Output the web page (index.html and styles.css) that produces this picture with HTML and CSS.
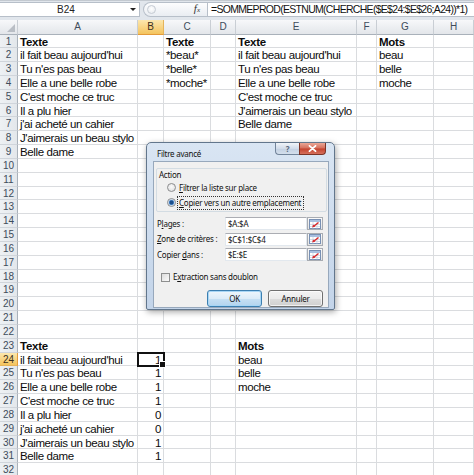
FILE: index.html
```html
<!DOCTYPE html>
<html lang="fr">
<head>
<meta charset="utf-8">
<title>Filtre avancé</title>
<link rel="stylesheet" href="styles.css">
</head>
<body>
<div class="fbar">
  <div class="namebox"><span class="nb-text">B24</span><span class="nb-arrow"></span></div>
  <div class="fctl">
    <div class="pill"><span class="grip"></span><span class="fx">f<span class="fxs">x</span></span></div>
  </div>
  <div class="formula">=SOMMEPROD(ESTNUM(CHERCHE($E$24:$E$26;A24))*1)</div>
</div>

<div class="sheet">
  <div class="ch corner"><svg width="8" height="8" viewBox="0 0 8 8"><polygon points="8,0 8,8 0,8" fill="#b9bec5"/></svg></div><div class="ch">A</div><div class="ch sel">B</div><div class="ch">C</div><div class="ch">D</div><div class="ch">E</div><div class="ch">F</div><div class="ch">G</div><div class="ch">H</div>

  <div class="rh">1</div><div class="b">Texte</div><div></div><div class="b">Texte</div><div></div><div class="b">Texte</div><div></div><div class="b">Mots</div><div></div>
  <div class="rh">2</div><div>il fait beau aujourd'hui</div><div></div><div>*beau*</div><div></div><div>il fait beau aujourd'hui</div><div></div><div>beau</div><div></div>
  <div class="rh">3</div><div>Tu n'es pas beau</div><div></div><div>*belle*</div><div></div><div>Tu n'es pas beau</div><div></div><div>belle</div><div></div>
  <div class="rh">4</div><div>Elle a une belle robe</div><div></div><div>*moche*</div><div></div><div>Elle a une belle robe</div><div></div><div>moche</div><div></div>
  <div class="rh">5</div><div>C'est moche ce truc</div><div></div><div></div><div></div><div>C'est moche ce truc</div><div></div><div></div><div></div>
  <div class="rh">6</div><div>Il a plu hier</div><div></div><div></div><div></div><div>J'aimerais un beau stylo</div><div></div><div></div><div></div>
  <div class="rh">7</div><div>j'ai acheté un cahier</div><div></div><div></div><div></div><div>Belle dame</div><div></div><div></div><div></div>
  <div class="rh">8</div><div>J'aimerais un beau stylo</div><div></div><div></div><div></div><div></div><div></div><div></div><div></div>
  <div class="rh">9</div><div>Belle dame</div><div></div><div></div><div></div><div></div><div></div><div></div><div></div>
  <div class="rh">10</div><div></div><div></div><div></div><div></div><div></div><div></div><div></div><div></div>
  <div class="rh">11</div><div></div><div></div><div></div><div></div><div></div><div></div><div></div><div></div>
  <div class="rh">12</div><div></div><div></div><div></div><div></div><div></div><div></div><div></div><div></div>
  <div class="rh">13</div><div></div><div></div><div></div><div></div><div></div><div></div><div></div><div></div>
  <div class="rh">14</div><div></div><div></div><div></div><div></div><div></div><div></div><div></div><div></div>
  <div class="rh">15</div><div></div><div></div><div></div><div></div><div></div><div></div><div></div><div></div>
  <div class="rh">16</div><div></div><div></div><div></div><div></div><div></div><div></div><div></div><div></div>
  <div class="rh">17</div><div></div><div></div><div></div><div></div><div></div><div></div><div></div><div></div>
  <div class="rh">18</div><div></div><div></div><div></div><div></div><div></div><div></div><div></div><div></div>
  <div class="rh">19</div><div></div><div></div><div></div><div></div><div></div><div></div><div></div><div></div>
  <div class="rh">20</div><div></div><div></div><div></div><div></div><div></div><div></div><div></div><div></div>
  <div class="rh">21</div><div></div><div></div><div></div><div></div><div></div><div></div><div></div><div></div>
  <div class="rh">22</div><div></div><div></div><div></div><div></div><div></div><div></div><div></div><div></div>
  <div class="rh">23</div><div class="b">Texte</div><div></div><div></div><div></div><div class="b">Mots</div><div></div><div></div><div></div>
  <div class="rh sel">24</div><div>il fait beau aujourd'hui</div><div class="n active">1</div><div></div><div></div><div>beau</div><div></div><div></div><div></div>
  <div class="rh">25</div><div>Tu n'es pas beau</div><div class="n">1</div><div></div><div></div><div>belle</div><div></div><div></div><div></div>
  <div class="rh">26</div><div>Elle a une belle robe</div><div class="n">1</div><div></div><div></div><div>moche</div><div></div><div></div><div></div>
  <div class="rh">27</div><div>C'est moche ce truc</div><div class="n">1</div><div></div><div></div><div></div><div></div><div></div><div></div>
  <div class="rh">28</div><div>Il a plu hier</div><div class="n">0</div><div></div><div></div><div></div><div></div><div></div><div></div>
  <div class="rh">29</div><div>j'ai acheté un cahier</div><div class="n">0</div><div></div><div></div><div></div><div></div><div></div><div></div>
  <div class="rh">30</div><div>J'aimerais un beau stylo</div><div class="n">1</div><div></div><div></div><div></div><div></div><div></div><div></div>
  <div class="rh">31</div><div>Belle dame</div><div class="n">1</div><div></div><div></div><div></div><div></div><div></div><div></div>
  <div class="rh">32</div><div></div><div></div><div></div><div></div><div></div><div></div><div></div><div></div>
</div>

<div class="dialog">
  <div class="titlebar">
    <span class="title">Filtre avancé</span>
    <span class="tb-help">?</span>
    <span class="tb-close"><svg width="9" height="7" viewBox="0 0 9 7"><path d="M1.5 0.8 L7.5 6.2 M7.5 0.8 L1.5 6.2" stroke="#fff" stroke-width="1.8" stroke-linecap="round"/></svg></span>
  </div>
  <div class="client">
    <div class="group">
      <div class="glabel">Action</div>
      <div class="opt"><span class="radio"></span><span class="otext"><u>F</u>iltrer la liste sur place</span></div>
      <div class="opt"><span class="radio on"></span><span class="otext focus"><u>C</u>opier vers un autre emplacement</span></div>
    </div>
    <div class="field"><span class="flabel">P<u>l</u>ages :</span><span class="input">$A:$A</span><span class="refbtn"><svg width="12" height="10" viewBox="0 0 12 10"><rect x="0.5" y="0.5" width="11" height="9" fill="#fff" stroke="#7890b4"/><rect x="1" y="1" width="10" height="2" fill="#a8c0e0"/><path d="M1 5.5H11M1 7.5H11M4 3V9.5M8 3V9.5" stroke="#c5d0de" stroke-width="0.7"/><path d="M9.5 3.5 L4.5 7.5" stroke="#d8262a" stroke-width="1.4"/><path d="M3.2 8.6 L4 5.6 L6.2 7.6 Z" fill="#d8262a"/></svg></span></div>
    <div class="field"><span class="flabel"><u>Z</u>one de critères :</span><span class="input">$C$1:$C$4</span><span class="refbtn"><svg width="12" height="10" viewBox="0 0 12 10"><rect x="0.5" y="0.5" width="11" height="9" fill="#fff" stroke="#7890b4"/><rect x="1" y="1" width="10" height="2" fill="#a8c0e0"/><path d="M1 5.5H11M1 7.5H11M4 3V9.5M8 3V9.5" stroke="#c5d0de" stroke-width="0.7"/><path d="M9.5 3.5 L4.5 7.5" stroke="#d8262a" stroke-width="1.4"/><path d="M3.2 8.6 L4 5.6 L6.2 7.6 Z" fill="#d8262a"/></svg></span></div>
    <div class="field"><span class="flabel">Copier <u>d</u>ans :</span><span class="input">$E:$E</span><span class="refbtn"><svg width="12" height="10" viewBox="0 0 12 10"><rect x="0.5" y="0.5" width="11" height="9" fill="#fff" stroke="#7890b4"/><rect x="1" y="1" width="10" height="2" fill="#a8c0e0"/><path d="M1 5.5H11M1 7.5H11M4 3V9.5M8 3V9.5" stroke="#c5d0de" stroke-width="0.7"/><path d="M9.5 3.5 L4.5 7.5" stroke="#d8262a" stroke-width="1.4"/><path d="M3.2 8.6 L4 5.6 L6.2 7.6 Z" fill="#d8262a"/></svg></span></div>
    <div class="checkrow"><span class="check"></span><span class="otext">E<u>x</u>traction sans doublon</span></div>
    <div class="buttons"><span class="btn default">OK</span><span class="btn">Annuler</span></div>
  </div>
</div>
</body>
</html>
```

FILE: styles.css
```css
* { box-sizing: border-box; margin: 0; padding: 0; }
html, body { width: 474px; height: 475px; overflow: hidden; background: #fff; }
body { position: relative; font-family: "Liberation Sans", Arial, sans-serif; color: #111; }

/* ---------- formula bar ---------- */
.fbar {
  display: flex;
  height: 20px;
  padding: 1px 0 3px;
  background: #e1e6ec;
  border-top: 1px solid #c3c9d0;
}
.namebox {
  width: 140px; height: 15px;
  display: flex; align-items: center;
  background: #fff;
  border: 1px solid #b7bfc9; border-left: none;
}
.nb-text { flex: 1; text-align: center; font-size: 10px; padding-left: 2px; color: #222; }
.nb-arrow {
  width: 0; height: 0; margin-right: 3px;
  border-left: 3px solid transparent; border-right: 3px solid transparent;
  border-top: 3px solid #222;
}
.fctl { width: 67px; height: 15px; padding-left: 3px; }
.pill {
  height: 15px; display: flex; align-items: center;
  border: 1px solid #b7bfc9; border-right: none;
  border-radius: 8px 0 0 8px;
  background: linear-gradient(#fdfdfe, #e9edf2);
}
.grip {
  width: 9px; height: 9px; margin-left: 3px;
  border: 1px solid #c5cbd3; border-radius: 50%;
  background: radial-gradient(circle at 50% 40%, #fff, #e3e7ec);
}
.fx {
  margin-left: auto; margin-right: 7px;
  font-family: "Liberation Serif", serif; font-style: italic; font-size: 11px; color: #333;
  line-height: 11px;
}
.fxs { font-size: 7px; }
.formula {
  flex: 1; height: 15px;
  background: #fff;
  border: 1px solid #b7bfc9; border-right: none;
  padding-left: 3px;
  font-size: 10.5px; letter-spacing: -0.7px; line-height: 13px; color: #111;
  white-space: nowrap; overflow: hidden;
}

/* ---------- sheet grid ---------- */
.sheet {
  display: grid;
  grid-template-columns: 18px 120px 26px 47px 25px 121px 20px 57px 40px;
  grid-template-rows: 14.5px;
  grid-auto-rows: 13.83px;
}
.sheet > div {
  border-right: 1px solid #dadcdf;
  border-bottom: 1px solid #dadcdf;
  font-size: 11.5px; letter-spacing: -0.38px;
  line-height: 14px;
  padding-left: 2px;
  white-space: nowrap; overflow: visible;
  color: #0c0c0c;
}
.sheet > .b { font-weight: bold; letter-spacing: -0.25px; }
.sheet > .n { text-align: right; padding-right: 2px; }
.sheet > .active { position: relative; outline: 2px solid #111; outline-offset: -1px; z-index: 1; }
.sheet > .active::after {
  content: ""; position: absolute; right: -3px; bottom: -3px;
  width: 5px; height: 5px; background: #111; border: 1px solid #fff;
}
.sheet > .ch {
  background: linear-gradient(#f7f8fa, #e3e6ea);
  border-right: 1px solid #c9ced4;
  border-bottom: 1px solid #a9b1ba;
  font-size: 10px; letter-spacing: 0; color: #3e4c5b;
  text-align: center; padding: 0; line-height: 14px;
}
.sheet > .ch.sel {
  background: linear-gradient(#fce7ae, #f4c45e);
  border-right-color: #e5b45a;
  border-bottom-color: #e39a3a;
  color: #3b3020;
}
.sheet > .corner { display: flex; align-items: flex-end; justify-content: flex-end; padding: 0 2px 2px 0; }
.sheet > .rh {
  background: linear-gradient(90deg, #eef1f4, #e3e7eb);
  border-right: 1px solid #a9b1ba;
  border-bottom: 1px solid #d0d5db;
  font-size: 10px; letter-spacing: 0; color: #3e4c5b;
  text-align: center; padding: 0; line-height: 14px;
}
.sheet > .rh.sel {
  background: linear-gradient(#fce7ae, #f4c45e);
  border-bottom-color: #e5b45a;
  border-right-color: #e39a3a;
  color: #3b3020;
}

/* ---------- dialog ---------- */
.dialog {
  position: absolute; left: 146px; top: 142px;
  width: 189px; height: 168px;
  display: flex; flex-direction: column;
  padding: 0 5px 5px 6px;
  background: linear-gradient(#d9e5f3, #c3d4e9);
  border: 1px solid #62768c;
  border-radius: 5px 5px 2px 2px;
  box-shadow: 1px 2px 6px rgba(0, 0, 0, 0.35);
  font-family: "Noto Sans", "Open Sans", sans-serif;
  font-size: 8px; letter-spacing: -0.25px; color: #111;
}
.titlebar { height: 18px; display: flex; align-items: flex-start; flex-shrink: 0; }
.title { padding: 6px 0 0 4px; line-height: 10px; flex: 1; }
.tb-help {
  width: 24px; height: 12px;
  display: flex; align-items: center; justify-content: center;
  background: linear-gradient(#f0f4f9, #d1dcea 50%, #c2d0e2 51%, #d4dfec);
  border: 1px solid #72849a; border-top: none; border-right: none;
  border-radius: 0 0 0 4px;
  font-size: 8px; font-weight: bold; color: #56677c; line-height: 10px;
}
.tb-close {
  width: 27px; height: 12px; margin-right: 3px;
  display: flex; align-items: center; justify-content: center;
  background: linear-gradient(#eaa696, #d46e5b 48%, #c4412d 52%, #d5705c);
  border: 1px solid #7c3427; border-top: none;
  border-radius: 0 0 4px 0;
}
.client {
  flex: 1;
  background: #f0f0f0;
  border: 1px solid #97a8bc;
  padding: 6px 0 0 2px;
}
.group {
  width: 171px; height: 44px;
  border: 1px solid #d3dce3; border-radius: 2px;
  padding: 1px 0 0 1px;
}
.glabel { line-height: 10px; padding-left: 1px; }
.opt { height: 15px; display: flex; align-items: center; padding-left: 9px; }
.radio {
  width: 9px; height: 9px; flex-shrink: 0;
  border: 1px solid #8b8c8e; border-radius: 50%;
  background: radial-gradient(circle at 50% 40%, #fbfbfb, #d9dadc);
}
.radio.on { background: radial-gradient(circle, #1c4f8c 0 1.6px, #5a93d2 2.4px, #e4ecf4 3.2px); }
.otext { margin-left: 3px; line-height: 10px; white-space: nowrap; }
.focus { outline: 1px dotted #333; outline-offset: 1px; padding-right: 1px; }
.field { height: 13px; display: flex; align-items: center; margin-top: 2.5px; }
.group + .field { margin-top: 5px; }
.flabel { width: 69px; padding-left: 1px; line-height: 10px; white-space: nowrap; }
.input {
  width: 82px; height: 13px;
  background: #fff;
  border: 1px solid #e2e8ee; border-top-color: #abadb3;
  padding-left: 2px; line-height: 11px; white-space: nowrap;
}
.refbtn {
  width: 16px; height: 13px;
  display: flex; align-items: center; justify-content: center;
  background: linear-gradient(#fafafa, #e4e4e4);
  border: 1px solid #a8acb2;
}
.checkrow { height: 10px; display: flex; align-items: center; margin-top: 11px; padding-left: 5px; }
.check {
  width: 9px; height: 9px; flex-shrink: 0;
  border: 1px solid #8e8f8f;
  background: linear-gradient(135deg, #dcdcdc, #fbfbfb);
}
.buttons { display: flex; justify-content: flex-end; gap: 6px; margin-top: 8px; padding-right: 5px; }
.btn {
  width: 55px; height: 17px;
  display: flex; align-items: center; justify-content: center;
  border: 1px solid #707070; border-radius: 3px;
  background: linear-gradient(#f3f3f3, #ebebeb 50%, #dddddd 51%, #cfcfcf);
  box-shadow: inset 0 0 0 1px rgba(255, 255, 255, 0.7);
  line-height: 10px;
}
.btn.default {
  border-color: #3c7fb1;
  background: linear-gradient(#eef6fc, #dcecf8 50%, #c6e0f4 51%, #b4d4ee);
  box-shadow: inset 0 0 0 1px #a8d6f5;
}
```
